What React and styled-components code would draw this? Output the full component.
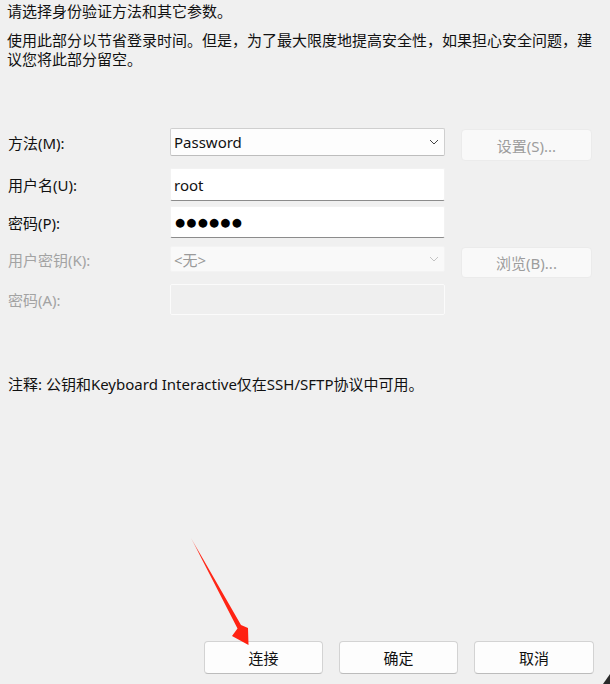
import React from "react";
import styled, { createGlobalStyle } from "styled-components";

const Global = createGlobalStyle`
  html, body { margin: 0; padding: 0; background: #f0f0f0; }
  #root { width: 610px; height: 684px; }
`;

const Page = styled.div`
  position: relative;
  box-sizing: border-box;
  width: 610px;
  height: 684px;
  padding: 1px 10px 10px 7px;
  background: #f0f0f0;
  display: flex;
  flex-direction: column;
  font-family: "Noto Sans", "Noto Sans CJK SC", sans-serif;
  font-size: 15px;
  color: #111;
  overflow: hidden;
`;

const Para = styled.p`
  margin: ${(p) => p.$top || 0}px 0 0 0;
  line-height: ${(p) => p.$lh || 20}px;
`;

const Row = styled.div`
  display: grid;
  grid-template-columns: 147px 275px 131px;
  column-gap: 16px;
  align-items: start;
  margin-top: ${(p) => p.$top}px;
  height: ${(p) => p.$h}px;
`;

const Label = styled.div`
  height: ${(p) => p.$h}px;
  display: flex;
  align-items: center;
  padding-left: 1px;
  color: ${(p) => (p.$disabled ? "#a3a3a3" : "#111")};
  white-space: nowrap;
`;

const Select = styled.div`
  box-sizing: border-box;
  height: ${(p) => p.$h}px;
  display: flex;
  align-items: center;
  justify-content: space-between;
  padding: 0 5px 0 3px;
  background: ${(p) => (p.$disabled ? "#f9f9f9" : "#fdfdfd")};
  border: 1px solid ${(p) => (p.$disabled ? "#f3f3f3" : "#cfcfcf")};
  border-bottom-color: ${(p) => (p.$disabled ? "#f3f3f3" : "#bdbdbd")};
  border-radius: 2px;
  color: ${(p) => (p.$disabled ? "#9a9a9a" : "#111")};
`;

const TextBox = styled.div`
  box-sizing: border-box;
  height: ${(p) => p.$h}px;
  display: flex;
  align-items: center;
  padding: 0 3px;
  background: ${(p) => (p.$disabled ? "#efefef" : "#ffffff")};
  border: 1px solid ${(p) => (p.$disabled ? "#fbfbfb" : "#f2f2f2")};
  border-bottom: 1px solid ${(p) => (p.$disabled ? "#fbfbfb" : "#8c8c8c")};
  border-radius: 2px;
  color: #111;
`;

const Dots = styled.span`
  font-family: "DejaVu Sans", sans-serif;
  font-size: 11.5px;
  letter-spacing: 1.3px;
  color: #000;
  padding-left: 1px;
`;

const SideButton = styled.div`
  box-sizing: border-box;
  margin-top: ${(p) => p.$top || 0}px;
  height: ${(p) => p.$h}px;
  display: flex;
  align-items: center;
  justify-content: center;
  background: #f9f9f9;
  border: 1px solid #ebebeb;
  border-radius: 4px;
  color: #9d9d9d;
`;

const Note = styled.div`
  margin-top: 59px;
  line-height: 20px;
  padding-left: 1px;
`;

const Footer = styled.div`
  margin-top: auto;
  display: flex;
  justify-content: flex-end;
  gap: 16px;
  padding-right: 6px;
`;

const Button = styled.div`
  box-sizing: border-box;
  width: ${(p) => p.$w || 119}px;
  height: 33px;
  display: flex;
  align-items: center;
  justify-content: center;
  background: #fdfdfd;
  border: 1px solid #d3d3d3;
  border-bottom-color: #bcbcbc;
  border-radius: 4px;
  color: #111;
`;

const Overlay = styled.svg`
  position: absolute;
  left: 0;
  top: 0;
  pointer-events: none;
`;

const Chevron = ({ color }) => (
  <svg width="10" height="6" viewBox="0 0 10 6">
    <path d="M1 1 L5 5 L9 1" fill="none" stroke={color} strokeWidth="1" />
  </svg>
);

export default function App() {
  return (
    <>
      <Global />
      <Page>
        <Para>请选择身份验证方法和其它参数。</Para>
        <Para $top={10} $lh={19}>
          使用此部分以节省登录时间。但是，为了最大限度地提高安全性，如果担心安全问题，建议您将此部分留空。
        </Para>

        <Row $top={59} $h={33}>
          <Label $h={28}>方法(M):</Label>
          <Select $h={28}>
            <span>Password</span>
            <Chevron color="#444" />
          </Select>
          <SideButton $top={1} $h={32}>设置(S)...</SideButton>
        </Row>

        <Row $top={7} $h={33}>
          <Label $h={33}>用户名(U):</Label>
          <TextBox $h={33}>root</TextBox>
        </Row>

        <Row $top={5} $h={32}>
          <Label $h={32}>密码(P):</Label>
          <TextBox $h={32}>
            <Dots>●●●●●●</Dots>
          </TextBox>
        </Row>

        <Row $top={8} $h={32}>
          <Label $h={26} $disabled>用户密钥(K):</Label>
          <Select $h={26} $disabled>
            <span>&lt;无&gt;</span>
            <Chevron color="#c4c4c4" />
          </Select>
          <SideButton $top={1} $h={31}>浏览(B)...</SideButton>
        </Row>

        <Row $top={6} $h={31}>
          <Label $h={31} $disabled>密码(A):</Label>
          <TextBox $h={31} $disabled />
        </Row>

        <Note>注释: 公钥和Keyboard Interactive仅在SSH/SFTP协议中可用。</Note>

        <Footer>
          <Button>连接</Button>
          <Button>确定</Button>
          <Button $w={120}>取消</Button>
        </Footer>

        <Overlay width="610" height="684" viewBox="0 0 610 684">
          <defs>
            <linearGradient id="fade" x1="191" y1="538" x2="248" y2="644" gradientUnits="userSpaceOnUse">
              <stop offset="0" stopColor="#ff4a3a" stopOpacity="0.5" />
              <stop offset="0.15" stopColor="#ff2a1a" />
              <stop offset="1" stopColor="#ff2010" />
            </linearGradient>
          </defs>
          <polygon
            points="191,538 241,625 248,628 248.5,645 232,636 237.5,628.5 191.5,539"
            fill="url(#fade)"
          />
          <polygon points="610,674 610,684 603,684" fill="#2a2a2a" />
        </Overlay>
      </Page>
    </>
  );
}
